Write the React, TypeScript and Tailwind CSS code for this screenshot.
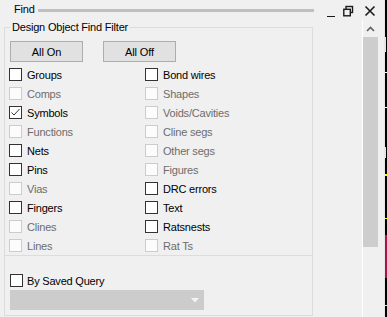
import React from "react";

type Item = { label: string; enabled: boolean; checked?: boolean };

const left: Item[] = [
  { label: "Groups", enabled: true },
  { label: "Comps", enabled: false },
  { label: "Symbols", enabled: true, checked: true },
  { label: "Functions", enabled: false },
  { label: "Nets", enabled: true },
  { label: "Pins", enabled: true },
  { label: "Vias", enabled: false },
  { label: "Fingers", enabled: true },
  { label: "Clines", enabled: false },
  { label: "Lines", enabled: false },
];

const right: Item[] = [
  { label: "Bond wires", enabled: true },
  { label: "Shapes", enabled: false },
  { label: "Voids/Cavities", enabled: false },
  { label: "Cline segs", enabled: false },
  { label: "Other segs", enabled: false },
  { label: "Figures", enabled: false },
  { label: "DRC errors", enabled: true },
  { label: "Text", enabled: true },
  { label: "Ratsnests", enabled: true },
  { label: "Rat Ts", enabled: false },
];

function Box({ enabled, checked }: { enabled: boolean; checked?: boolean }) {
  return (
    <div
      className={
        enabled
          ? "w-[13px] h-[13px] shrink-0 border border-[#333333] bg-white flex items-center justify-center"
          : "w-[13px] h-[13px] shrink-0 border border-[#cccccc] bg-[#fcfcfc]"
      }
    >
      {checked && (
        <svg width="11" height="11" viewBox="0 0 11 11">
          <polyline points="1.5,5.5 4,8 9.5,2" fill="none" stroke="#333" strokeWidth="1" />
        </svg>
      )}
    </div>
  );
}

function Check({ item }: { item: Item }) {
  return (
    <div className="h-[19px] flex items-center gap-[5px]">
      <Box enabled={item.enabled} checked={item.checked} />
      <span className={item.enabled ? "text-black" : "text-[#6d6d6d]"}>{item.label}</span>
    </div>
  );
}

export default function App() {
  return (
    <div
      className="w-[387px] h-[317px] bg-[#f0f0f0] flex overflow-hidden text-[11px] tracking-[-0.2px] leading-[14px] text-black"
      style={{ fontFamily: '"Liberation Sans", Arial, sans-serif' }}
    >
      <div className="w-[384px] flex flex-col">
        {/* title bar */}
        <div className="h-[20px] flex items-center">
          <span className="ml-[14px] mt-[-2px]">Find</span>
          <div className="ml-[3px] w-[276px] h-[3px] bg-[#c0c0c0] mt-[1px]" />
          <div className="ml-[12px] flex items-center gap-[7px] mt-[2px]">
            <svg width="10" height="12" viewBox="0 0 10 12">
              <rect x="1" y="11" width="8" height="1.5" fill="#1a1a1a" />
            </svg>
            <svg width="11" height="12" viewBox="0 0 11 12">
              <rect x="3" y="1.5" width="6.5" height="6" fill="none" stroke="#1a1a1a" strokeWidth="1.4" />
              <rect x="0.8" y="4.3" width="6.5" height="6.5" fill="#f0f0f0" stroke="#1a1a1a" strokeWidth="1.4" />
            </svg>
            <svg width="12" height="12" viewBox="0 0 12 12" className="ml-[3px]">
              <path d="M1.5 1.5 L10.5 10.5 M10.5 1.5 L1.5 10.5" stroke="#1a1a1a" strokeWidth="1.6" />
            </svg>
          </div>
        </div>

        <div className="flex flex-1">
          <div className="w-[362px] pl-[4px]">
            <fieldset className="w-[309px] h-[236px] border border-[#dcdcdc] pl-[4px]">
              <legend className="ml-[1px] px-[2px]">Design Object Find Filter</legend>
              <div className="flex gap-[20px] mt-[7px] ml-[1px]">
                <button className="w-[73px] h-[21px] bg-[#e1e1e1] border border-[#adadad] tracking-[-0.1px]">
                  All On
                </button>
                <button className="w-[73px] h-[21px] bg-[#e1e1e1] border border-[#adadad] tracking-[-0.1px]">
                  All Off
                </button>
              </div>
              <div className="grid grid-cols-[136px_1fr] mt-[3px]">
                <div className="flex flex-col">
                  {left.map((it) => (
                    <Check key={it.label} item={it} />
                  ))}
                </div>
                <div className="flex flex-col">
                  {right.map((it) => (
                    <Check key={it.label} item={it} />
                  ))}
                </div>
              </div>
            </fieldset>
            <div className="w-[309px] h-[60px] border border-t-0 border-[#dcdcdc] pl-[5px] pt-[18px]">
              <div className="flex items-center gap-[4px] h-[13px]">
                <Box enabled={true} />
                <span>By Saved Query</span>
              </div>
              <div className="mt-[3px] w-[194px] h-[20px] bg-[#cccccc] flex items-center justify-end pr-[5px]">
                <svg width="8" height="5" viewBox="0 0 8 5">
                  <polygon points="0,0 8,0 4,4.5" fill="#f4f4f4" />
                </svg>
              </div>
            </div>
          </div>
          <div className="w-[1px] bg-white" />
          <div className="w-[21px] flex flex-col">
            <div className="h-[17px] w-[15px] flex items-center justify-center">
              <svg width="9" height="6" viewBox="0 0 9 6">
                <polyline points="1,5 4.5,1.5 8,5" fill="none" stroke="#606060" strokeWidth="1.6" />
              </svg>
            </div>
            <div className="w-[15px] h-[210px] bg-[#cdcdcd]" />
          </div>
        </div>
      </div>

      {/* canvas edge behind the pane */}
      <div className="w-[3px] h-full bg-black">
        <svg width="3" height="317" viewBox="0 0 3 317">
          <rect x="0" y="0" width="1" height="317" fill="#e6e6e6" />
          <rect x="1" y="37" width="1" height="15" fill="#ffff00" />
          <rect x="1" y="72" width="2" height="1" fill="#ffffff" />
          <rect x="1" y="107" width="2" height="1" fill="#ffffff" />
          <rect x="1" y="147" width="1" height="11" fill="#ffff00" />
          <rect x="1" y="174" width="2" height="2" fill="#ffff00" />
          <rect x="1" y="218" width="2" height="1" fill="#ffff00" />
          <rect x="1" y="235" width="2" height="43" fill="#b0104a" />
          <rect x="1" y="305" width="2" height="1" fill="#ffff00" />
        </svg>
      </div>
    </div>
  );
}
